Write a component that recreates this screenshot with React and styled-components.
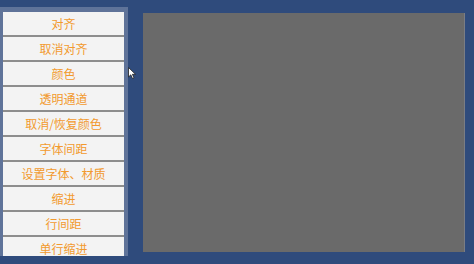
import styled, { createGlobalStyle } from "styled-components";

const GlobalStyle = createGlobalStyle`
    html, body {
        margin: 0;
        padding: 0;
        background: #2f4b7c;
        font-family: "Noto Sans CJK SC", "Noto Sans", sans-serif;
    }
`;

const Screen = styled.div`
    position: relative;
    width: 474px;
    height: 264px;
    display: flex;
    flex-direction: row;
    align-items: flex-start;
    background: #2f4b7c;
    overflow: hidden;
`;

const MenuPanel = styled.div`
    margin-top: 7px;
    width: 128px;
    height: 249px;
    box-sizing: border-box;
    padding: 5px 4px 2px 3px;
    background: #5f7399;
    overflow: hidden;
    display: flex;
    flex-direction: column;
`;

const MenuButton = styled.div`
    flex: none;
    height: 23px;
    border-bottom: 2px solid #8d8d8d;
    background: #f3f3f3;
    color: #f29a2e;
    font-size: 12px;
    line-height: 23px;
    text-align: center;
    white-space: nowrap;
`;

const Canvas = styled.div`
    margin-top: 13px;
    margin-left: 15px;
    width: 322px;
    height: 239px;
    background: #6a6a6a;
    border-right: 1px solid #7a7d85;
    box-sizing: border-box;
`;

const Cursor = styled.svg`
    position: absolute;
    left: 128px;
    top: 67px;
`;

const items = [
    "对齐",
    "取消对齐",
    "颜色",
    "透明通道",
    "取消/恢复颜色",
    "字体间距",
    "设置字体、材质",
    "缩进",
    "行间距",
    "单行缩进",
];

const App = () => {
    return (
        <Screen>
            <GlobalStyle />
            <MenuPanel>
                {items.map((label) => (
                    <MenuButton key={label}>{label}</MenuButton>
                ))}
            </MenuPanel>
            <Canvas />
            <Cursor width="9" height="13" viewBox="0 0 9 13">
                <path d="M0.5 0.5 L0.5 10 L2.8 7.8 L4.5 11.5 L6 10.8 L4.4 7.3 L7.5 7.3 Z" fill="#ffffff" stroke="#222" strokeWidth="0.8" />
            </Cursor>
        </Screen>
    );
};

export default App;
